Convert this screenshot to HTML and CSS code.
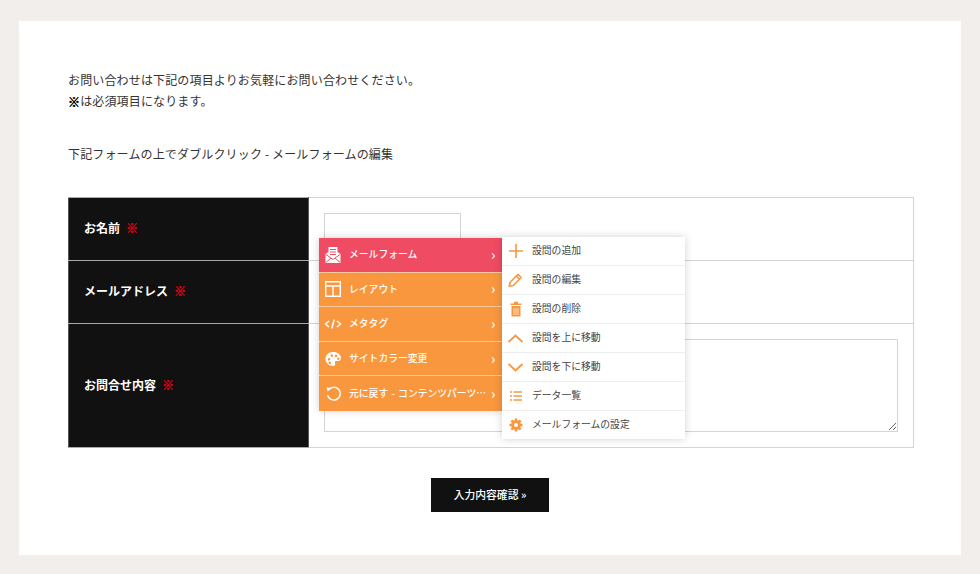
FILE: index.html
```html
<!DOCTYPE html>
<html lang="ja">
<head>
  <meta charset="UTF-8" />
  <meta name="viewport" content="width=device-width, initial-scale=1" />
  <title>お問い合わせ</title>
  <link rel="stylesheet" href="styles.css">
</head>
<body>
  <div class="sheet">
    <p class="lead">お問い合わせは下記の項目よりお気軽にお問い合わせください。<br><span class="mark">※</span>は必須項目になります。</p>
    <p class="hint">下記フォームの上でダブルクリック - メールフォームの編集</p>

    <form>
      <table>
        <tr class="row-s"><th>お名前<span class="req">※</span></th><td><input type="text"></td></tr>
        <tr class="row-s"><th>メールアドレス<span class="req">※</span></th><td><input type="text"></td></tr>
        <tr><th>お問合せ内容<span class="req">※</span></th><td><textarea></textarea></td></tr>
      </table>
      <div class="submit"><button type="button">入力内容確認 »</button></div>
    </form>

    <!-- context menu -->
    <div class="menu">
      <ul class="main">
        <li class="on">
          <svg viewBox="0 0 18 18"><path fill="#fff" d="M4.500 1h9v5l3 2v9h-15V8l3-2z"/><path fill="none" stroke="#ef4b63" d="M6 3.500h6M6 6h6M6 8.500h6M2 8.500l7 5 7-5M2 16.500l5-4.500M16 16.500l-5-4.500"/></svg>
          <span>メールフォーム</span><i>›</i>
        </li>
        <li>
          <svg viewBox="0 0 18 18"><path fill="none" stroke="#fff" stroke-width="1.400" d="M1.700 1.700h14.600v14.600H1.700zM1.700 6h14.600M9 6v10.300"/></svg>
          <span>レイアウト</span><i>›</i>
        </li>
        <li>
          <svg viewBox="0 0 18 18"><path fill="none" stroke="#fff" stroke-width="1.500" d="M5 6L1.500 9 5 12M13 6l3.500 3-3.500 3M10.300 4.500l-2.600 9"/></svg>
          <span>メタタグ</span><i>›</i>
        </li>
        <li>
          <svg viewBox="0 0 18 18"><path fill="#fff" fill-rule="evenodd" d="M9 2c4.500 0 8 2.700 8 6 0 2.600-2.200 3.200-4 3-1.500-.2-2.500.6-2 2 .5 1.300.2 3-2 3-4 0-7.500-3-7.500-7S4.500 2 9 2zM5 8a1.300 1.300 0 1 0 .01 0zM7.800 4.200a1.300 1.300 0 1 0 .01 0zM12 4.500a1.300 1.300 0 1 0 .01 0zM14.300 7.500a1.200 1.200 0 1 0 .01 0zM5.800 11.500a1.300 1.300 0 1 0 .01 0z"/></svg>
          <span>サイトカラー変更</span><i>›</i>
        </li>
        <li>
          <svg viewBox="0 0 18 18"><path fill="none" stroke="#fff" stroke-width="1.500" d="M5 4.500A6.400 6.400 0 1 1 3.600 10"/><path fill="#fff" d="M2.500 2.500l4.800.6-3.600 3.400z"/></svg>
          <span>元に戻す - コンテンツパーツ…</span><i>›</i>
        </li>
      </ul>
      <ul class="sub">
        <li>
          <svg viewBox="0 0 18 18"><path fill="none" stroke="#f9973f" stroke-width="1.600" d="M9 2v14M2 9h14"/></svg>
          <span>設問の追加</span>
        </li>
        <li>
          <svg viewBox="0 0 18 18"><path fill="none" stroke="#f9973f" stroke-width="1.600" stroke-linejoin="round" d="M2.200 15.300l.9-4L11 3.300l3.200 3.200-8 8zM9.300 5l3.200 3.200"/></svg>
          <span>設問の編集</span>
        </li>
        <li>
          <svg viewBox="0 0 18 18"><path fill="#f9973f" d="M3.500 3.500h11V5h-11zM7 1.800h4v1.700H7zM4.500 6h9v10.500h-9z"/><path stroke="#fff" stroke-width=".7" d="M7 8v7M9 8v7M11 8v7"/></svg>
          <span>設問の削除</span>
        </li>
        <li>
          <svg viewBox="0 0 18 18"><path fill="none" stroke="#f9973f" stroke-width="1.800" d="M1.500 13L8.500 6.500l7 6.500"/></svg>
          <span>設問を上に移動</span>
        </li>
        <li>
          <svg viewBox="0 0 18 18"><path fill="none" stroke="#f9973f" stroke-width="1.800" d="M1.500 6l7 6.500 7-6.500"/></svg>
          <span>設問を下に移動</span>
        </li>
        <li>
          <svg viewBox="0 0 18 18"><path fill="none" stroke="#f9973f" stroke-width="1.400" d="M3 5h2M3 9h2M3 13h2M6.500 5H15M6.500 9H15M6.500 13H15"/></svg>
          <span>データ一覧</span>
        </li>
        <li>
          <svg viewBox="0 0 18 18"><circle cx="9" cy="9" r="3.400" fill="none" stroke="#f9973f" stroke-width="3"/><path fill="none" stroke="#f9973f" stroke-width="2.400" d="M9 2.500v2.500M9 13v2.500M2.500 9H5M13 9h2.500M4.400 4.400l1.800 1.800M11.800 11.800l1.800 1.800M13.600 4.400l-1.800 1.800M6.200 11.800l-1.800 1.800"/></svg>
          <span>メールフォームの設定</span>
        </li>
      </ul>
    </div>
  </div>
</body>
</html>
```

FILE: styles.css
```css
* { box-sizing: border-box; }
html, body { margin: 0; padding: 0; }
body { background-color: #f1eeec; color: #333; font-family: "Noto Sans CJK JP", "Liberation Sans", sans-serif; font-size: 12px; }

.sheet { position: relative; width: 942px; height: 534px; margin: 21px 0 0 19px; padding: 48px 47px 0 49px; background-color: #fff; }
.lead { margin: 0; line-height: 21px; letter-spacing: .15px; }
.mark { position: relative; top: 1px; color: #000; font-weight: 900; -webkit-text-stroke: .5px #000; }
.hint { margin: 32px 0 0; line-height: 21px; letter-spacing: .15px; }

form { margin-top: 33px; }
table { width: 100%; border-collapse: collapse; table-layout: fixed; }
th, td { border: 1px solid #d4d4d4; }
th { width: 240px; padding: 0 0 3px 15px; background-color: #111; border-color: #aaa #555; color: #fff; font-size: 12px; font-weight: 700; text-align: left; }
td { padding: 15px; }
.row-s th, .row-s td { height: 63px; }
.req { margin-left: 6px; color: #e60012; font-weight: 900; -webkit-text-stroke: .4px #e60012; }
input, textarea { display: block; border: 1px solid #d4d4d4; border-radius: 0; background: #fff; }
input { width: 137px; height: 32px; }
textarea { width: 100%; height: 93px; }

.submit { margin-top: 30px; padding-right: 2px; text-align: center; }
button { width: 118px; height: 34px; padding: 0 0 2px; border: 0; background-color: #111; color: #fff; font-family: inherit; font-size: 10.800px; font-weight: 500; }

/* context menu */
.menu { position: absolute; left: 300px; top: 217px; display: flex; align-items: flex-start; font-size: 9.800px; }
.menu ul { width: 183px; margin: 0; padding: 0; list-style: none; box-shadow: 0 0 8px rgba(0, 0, 0, .18); }
.menu li { display: flex; align-items: center; }
.menu svg { flex: none; width: 18px; height: 18px; }
.menu span { flex: 1; white-space: nowrap; overflow: hidden; }

.main li { height: 34.600px; padding: 0 5px 0 5px; background-color: #f9973f; border-bottom: 1px solid #fcc99d; color: #fff; font-weight: 500; }
.main li:last-child { border-bottom: 0; }
.main li.on { background-color: #ef4b63; }
.main span { margin: 0 0 1px 7px; word-spacing: 1px; }
.main i { width: 6px; margin-bottom: 2px; font-style: normal; font-size: 14px; line-height: 1; }

.sub { margin-top: -1px !important; background-color: #fff; }
.sub li { height: 29px; padding: 0 5px; border-bottom: 1px solid #ededed; color: #444; }
.sub li:last-child { height: 28px; border-bottom: 0; }
.sub span { margin: 0 0 2px 7px; }
```
